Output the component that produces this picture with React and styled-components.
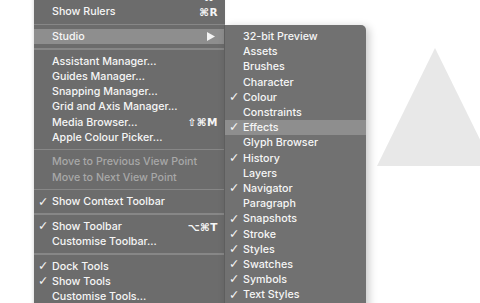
import React from "react";
import styled, { createGlobalStyle } from "styled-components";

const GlobalStyle = createGlobalStyle`
  html, body {
    margin: 0;
    padding: 0;
    background: #ffffff;
  }
  body {
    font-family: Inter, "Noto Sans", "DejaVu Sans", sans-serif;
    -webkit-font-smoothing: antialiased;
  }
`;

const mainItems = [
  { label: "Show Grid", shortcut: "⌘'" },
  { label: "Show Rulers", shortcut: "⌘R" },
  { sep: true },
  { label: "Studio", arrow: true, active: true },
  { sep: true },
  { label: "Assistant Manager..." },
  { label: "Guides Manager..." },
  { label: "Snapping Manager..." },
  { label: "Grid and Axis Manager..." },
  { label: "Media Browser...", shortcut: "⇧⌘M" },
  { label: "Apple Colour Picker..." },
  { sep: true },
  { label: "Move to Previous View Point", disabled: true },
  { label: "Move to Next View Point", disabled: true },
  { sep: true },
  { label: "Show Context Toolbar", checked: true },
  { sep: true },
  { label: "Show Toolbar", checked: true, shortcut: "⌥⌘T" },
  { label: "Customise Toolbar..." },
  { sep: true },
  { label: "Dock Tools", checked: true },
  { label: "Show Tools", checked: true },
  { label: "Customise Tools..." },
];

const studioItems = [
  { label: "32-bit Preview" },
  { label: "Assets" },
  { label: "Brushes" },
  { label: "Character" },
  { label: "Colour", checked: true },
  { label: "Constraints" },
  { label: "Effects", checked: true, active: true },
  { label: "Glyph Browser" },
  { label: "History", checked: true },
  { label: "Layers" },
  { label: "Navigator", checked: true },
  { label: "Paragraph" },
  { label: "Snapshots", checked: true },
  { label: "Stroke", checked: true },
  { label: "Styles", checked: true },
  { label: "Swatches", checked: true },
  { label: "Symbols", checked: true },
  { label: "Text Styles", checked: true },
  { label: "Text Wrap" },
];

const MenuItems = ({ items }) =>
  items.map((item, i) =>
    item.sep ? (
      <Separator key={i} />
    ) : (
      <Row key={i} $active={item.active} $disabled={item.disabled}>
        <Check>{item.checked ? "✓" : ""}</Check>
        <Label>{item.label}</Label>
        {item.shortcut && <Shortcut>{item.shortcut}</Shortcut>}
        {item.arrow && (
          <Arrow viewBox="0 0 8 9">
            <path d="M0 0 L8 4.5 L0 9 Z" fill="#f4f4f4" />
          </Arrow>
        )}
      </Row>
    )
  );

const App = () => {
  return (
    <Page>
      <GlobalStyle />
      <Shape viewBox="0 0 120 120">
        <polygon points="58,0 116,118 0,118" fill="#e8e8e8" />
      </Shape>
      <Menu>
        <MenuItems items={mainItems} />
      </Menu>
      <SubMenu>
        <MenuItems items={studioItems} />
      </SubMenu>
    </Page>
  );
};

export default App;

const Page = styled.div`
  position: relative;
  width: 480px;
  height: 303px;
  overflow: hidden;
  background: #ffffff;
`;

const Shape = styled.svg`
  position: absolute;
  left: 377px;
  top: 48px;
  width: 120px;
  height: 120px;
`;

const Menu = styled.div`
  position: absolute;
  left: 34px;
  top: -14.8px;
  width: 191px;
  padding: 4px 0;
  background: #6c6c6c;
  box-shadow: -1px 0 3px rgba(0, 0, 0, 0.12);
  display: flex;
  flex-direction: column;
`;

const SubMenu = styled.div`
  position: absolute;
  left: 224px;
  top: 25px;
  width: 141px;
  padding: 4px 0;
  background: #717171;
  border-left: 1px solid #5e5e5e;
  border-radius: 0 5px 0 0;
  box-shadow: 3px 2px 8px rgba(0, 0, 0, 0.22);
  display: flex;
  flex-direction: column;
`;

const Row = styled.div`
  display: flex;
  align-items: center;
  height: 15.2px;
  padding-right: 7px;
  font-size: 10.7px;
  font-weight: 500;
  color: ${(p) => (p.$disabled ? "#a8a8a8" : "#f6f6f6")};
  background: ${(p) => (p.$active ? "#8e8e8e" : "transparent")};
  white-space: nowrap;
`;

const Check = styled.span`
  width: 13px;
  padding-left: 4px;
  margin-right: 1px;
  font-family: "DejaVu Sans", sans-serif;
  font-size: 12.5px;
  font-weight: 700;
  line-height: 1;
`;

const Label = styled.span`
  flex: 1;
`;

const Shortcut = styled.span`
  font-family: "DejaVu Sans", sans-serif;
  font-size: 10.5px;
  font-weight: 700;
  letter-spacing: 0.5px;
`;

const Arrow = styled.svg`
  width: 8px;
  height: 9px;
  margin-right: 3px;
`;

const Separator = styled.div`
  height: 9.5px;
  display: flex;
  align-items: center;

  &::after {
    content: "";
    flex: 1;
    height: 1.5px;
    background: #878787;
  }
`;
